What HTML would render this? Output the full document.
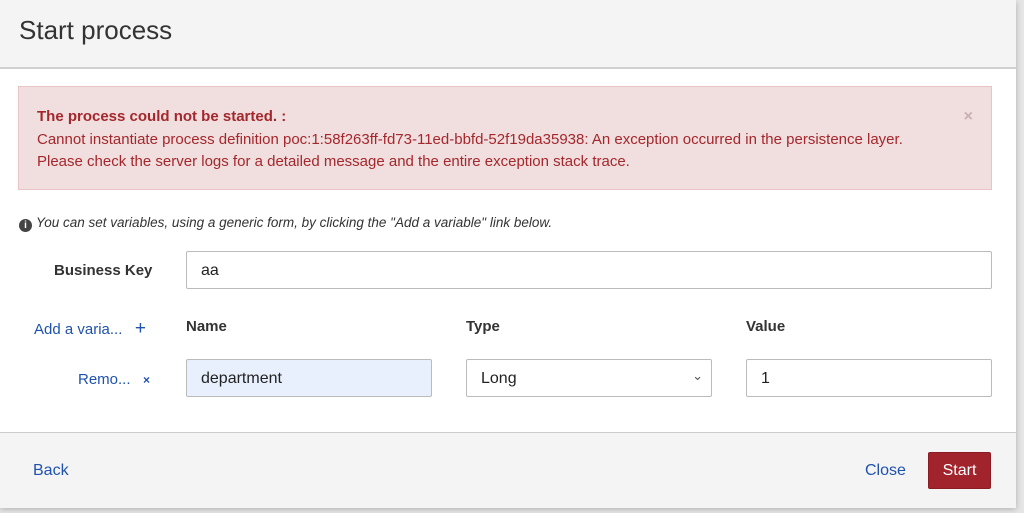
<!DOCTYPE html>
<html><head><style>
body{margin:0;width:1024px;height:513px;background:#e6e6e6;font-family:"Liberation Sans",sans-serif;position:relative;overflow:hidden}
.m{position:absolute;left:0;top:0;width:1016px;height:507px;background:#fff;box-shadow:0 2px 6px rgba(0,0,0,.25)}
.hd{position:absolute;left:0;top:0;width:1016px;height:67px;background:#f4f4f4;border-bottom:2px solid #d0d0d0}
.hd h1{margin:0;position:absolute;left:19px;top:15px;font-size:26px;font-weight:normal;color:#333}
.al{position:absolute;left:18px;top:86px;width:972px;height:102px;background:#f1dede;border:1px solid #e8c4c6;color:#a3282d;font-size:15px;line-height:22.5px}
.al .t{position:absolute;left:18px;top:19px;width:912px}
.x{position:absolute;right:18px;top:19px;color:#c8b0b0;font-size:16px;font-weight:bold}
.info{position:absolute;left:19px;top:215px;font-size:13.5px;font-style:italic;color:#333}
.info b{display:inline-block;width:13px;height:13px;border-radius:50%;background:#444;color:#fff;font-style:normal;font-size:10px;text-align:center;line-height:13px;vertical-align:-1px;margin-right:4px}
.lbl{position:absolute;font-size:15px;font-weight:bold;color:#333}
.in{position:absolute;height:36px;border:1px solid #bbb;border-radius:2px;box-sizing:border-box;font-size:16px;color:#222;padding:10px 14px 0;background:#fff}
.lk{position:absolute;color:#1f52ae;font-size:15px}
.ft{position:absolute;left:0;top:432px;width:1016px;height:75px;background:#f4f4f4;border-top:1px solid #ccc}
.btn{position:absolute;left:928px;top:452px;width:63px;height:37px;background:#a1232c;border:1px solid #8a1c24;box-sizing:border-box;color:#fff;font-size:16px;text-align:center;line-height:35px;border-radius:2px}
</style></head><body>
<div class="m">
<div class="hd"><h1>Start process</h1></div>
<div class="al"><div class="t"><b>The process could not be started. :</b><br>Cannot instantiate process definition poc:1:58f263ff-fd73-11ed-bbfd-52f19da35938: An exception occurred in the persistence layer. Please check the server logs for a detailed message and the entire exception stack trace.</div><span class="x">×</span></div>
<div class="info"><b>i</b>You can set variables, using a generic form, by clicking the "Add a variable" link below.</div>
<div class="lbl" style="left:54px;top:262px">Business Key</div>
<div class="in" style="left:186px;top:251px;width:806px;height:38px">aa</div>
<div class="lk" style="left:34px;top:318px">Add a varia...&nbsp;&nbsp;&nbsp;<span style="font-size:19px">+</span></div>
<div class="lbl" style="left:186px;top:318px">Name</div>
<div class="lbl" style="left:466px;top:318px">Type</div>
<div class="lbl" style="left:746px;top:318px">Value</div>
<div class="lk" style="left:78px;top:371px">Remo...&nbsp;&nbsp;&nbsp;<span style="font-size:12px;font-weight:bold">×</span></div>
<div class="in" style="left:186px;top:359px;width:246px;height:38px;background:#e8f0fe">department</div>
<div class="in" style="left:466px;top:359px;width:246px;height:38px">Long<span style="position:absolute;right:8px;top:8px;font-size:13px;color:#555">⌄</span></div>
<div class="in" style="left:746px;top:359px;width:246px;height:38px">1</div>
<div class="ft">
<div class="lk" style="left:33px;top:29px;font-size:16px">Back</div>
<div class="lk" style="left:865px;top:29px;font-size:16px">Close</div>
</div>
<div class="btn">Start</div>
</div>
</body></html>
